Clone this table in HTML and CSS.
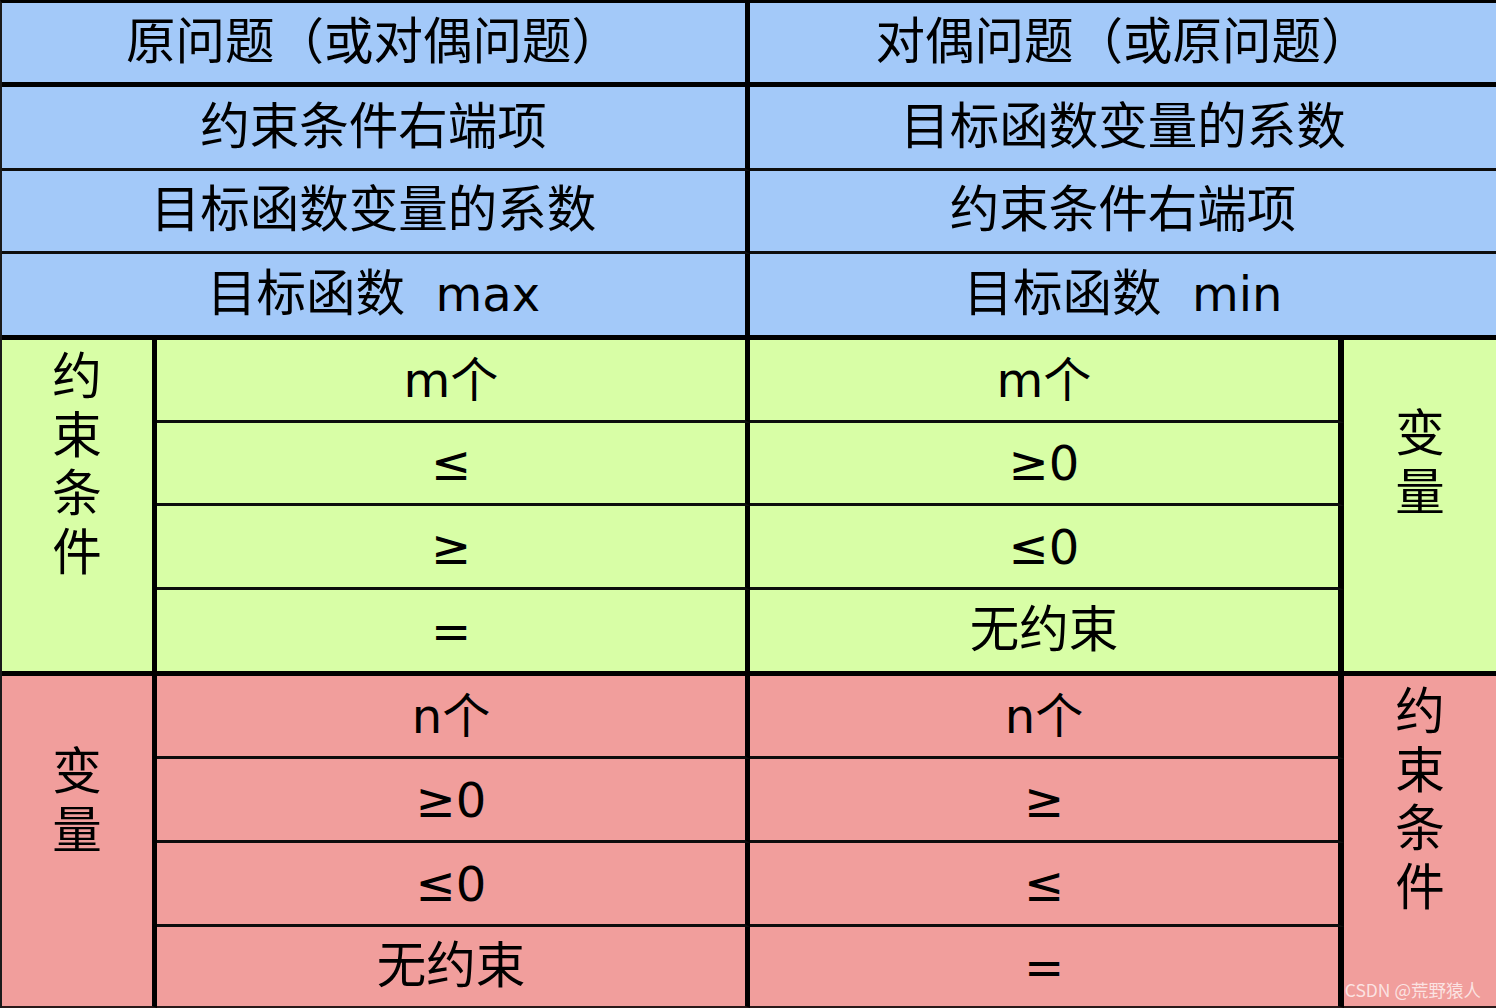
FILE: index.html
```html
<!DOCTYPE html>
<html lang="zh">
<head>
<meta charset="utf-8">
<title>原问题与对偶问题</title>
<link rel="stylesheet" href="styles.css">
</head>
<body>
<div class="sheet">
  <div class="cell blue wide b5 zh">原问题（或对偶问题）</div>
  <div class="cell blue wide b5 nr zh">对偶问题（或原问题）</div>
  <div class="cell blue wide zh">约束条件右端项</div>
  <div class="cell blue wide nr zh">目标函数变量的系数</div>
  <div class="cell blue wide zh">目标函数变量的系数</div>
  <div class="cell blue wide nr zh">约束条件右端项</div>
  <div class="cell blue wide b5"><span class="pre"><span class="zh">目标函数</span>  max</span></div>
  <div class="cell blue wide b5 nr"><span class="pre"><span class="zh">目标函数</span>  min</span></div>

  <div class="cell green label zh g-left b5">约<br>束<br>条<br>件</div>
  <div class="cell green label zh g-right b5 nr">变<br>量</div>
  <div class="cell green">m个</div>
  <div class="cell green c3">m个</div>
  <div class="cell green">≤</div>
  <div class="cell green c3">≥0</div>
  <div class="cell green">≥</div>
  <div class="cell green c3">≤0</div>
  <div class="cell green b5">=</div>
  <div class="cell green c3 b5 zh">无约束</div>

  <div class="cell pink label zh p-left b2">变<br>量</div>
  <div class="cell pink label zh p-right b2 nr">约<br>束<br>条<br>件</div>
  <div class="cell pink">n个</div>
  <div class="cell pink c3">n个</div>
  <div class="cell pink">≥0</div>
  <div class="cell pink c3">≥</div>
  <div class="cell pink">≤0</div>
  <div class="cell pink c3">≤</div>
  <div class="cell pink b2 zh">无约束</div>
  <div class="cell pink c3 b2">=</div>
</div>
<div class="watermark">CSDN @荒野猿人</div>
</body>
</html>
```

FILE: styles.css
```css
html, body {
  margin: 0;
  padding: 0;
  background: #ffffff;
  overflow: hidden;
}

body {
  position: relative;
  width: 1496px;
  height: 1008px;
}

.sheet {
  display: grid;
  grid-template-columns: 155px 593px 594px 152px;
  grid-template-rows: 84px 84px 83px 86px 83px 83px 84px 86px 83px 84px 84px 81px;
  width: 1494px;
  height: 1005px;
  border-top: 3px solid #000;
  border-left: 2px solid #1a1a1a;
  font-family: "DejaVu Sans", "Noto Sans CJK SC", sans-serif;
  font-size: 48px;
  color: #000;
}

.cell {
  box-sizing: border-box;
  display: flex;
  align-items: center;
  justify-content: center;
  border-right: 5px solid #000;
  border-bottom: 3px solid #0d0d0d;
  line-height: 1;
  white-space: nowrap;
}

.zh { font-size: 49.5px; }

.pre { white-space: pre; }

.wide { grid-column: span 2; }

.b5 { border-bottom-width: 5px; border-bottom-color: #000; }
.b2 { border-bottom-width: 2px; border-bottom-color: #2a1a1a; }
.nr { border-right: none; }
.c3 { border-right-width: 6px; }

.blue { background: #a3c9f9; }
.green { background: #d8fea6; }
.pink { background: #f19e9c; }

.label {
  flex-direction: column;
  justify-content: flex-start;
  line-height: 58.5px;
  text-align: center;
  white-space: normal;
}

.g-left { grid-column: 1; grid-row: 5 / span 4; padding-top: 8px; }
.g-right { grid-column: 4; grid-row: 5 / span 4; padding-top: 65px; }
.p-left { grid-column: 1; grid-row: 9 / span 4; padding-top: 67px; }
.p-right { grid-column: 4; grid-row: 9 / span 4; padding-top: 7px; }

.watermark {
  position: absolute;
  right: 15px;
  bottom: 8px;
  font-family: "Noto Sans CJK SC", sans-serif;
  font-size: 17.5px;
  line-height: 20px;
  color: rgba(255, 255, 255, 0.72);
  white-space: nowrap;
}
```
